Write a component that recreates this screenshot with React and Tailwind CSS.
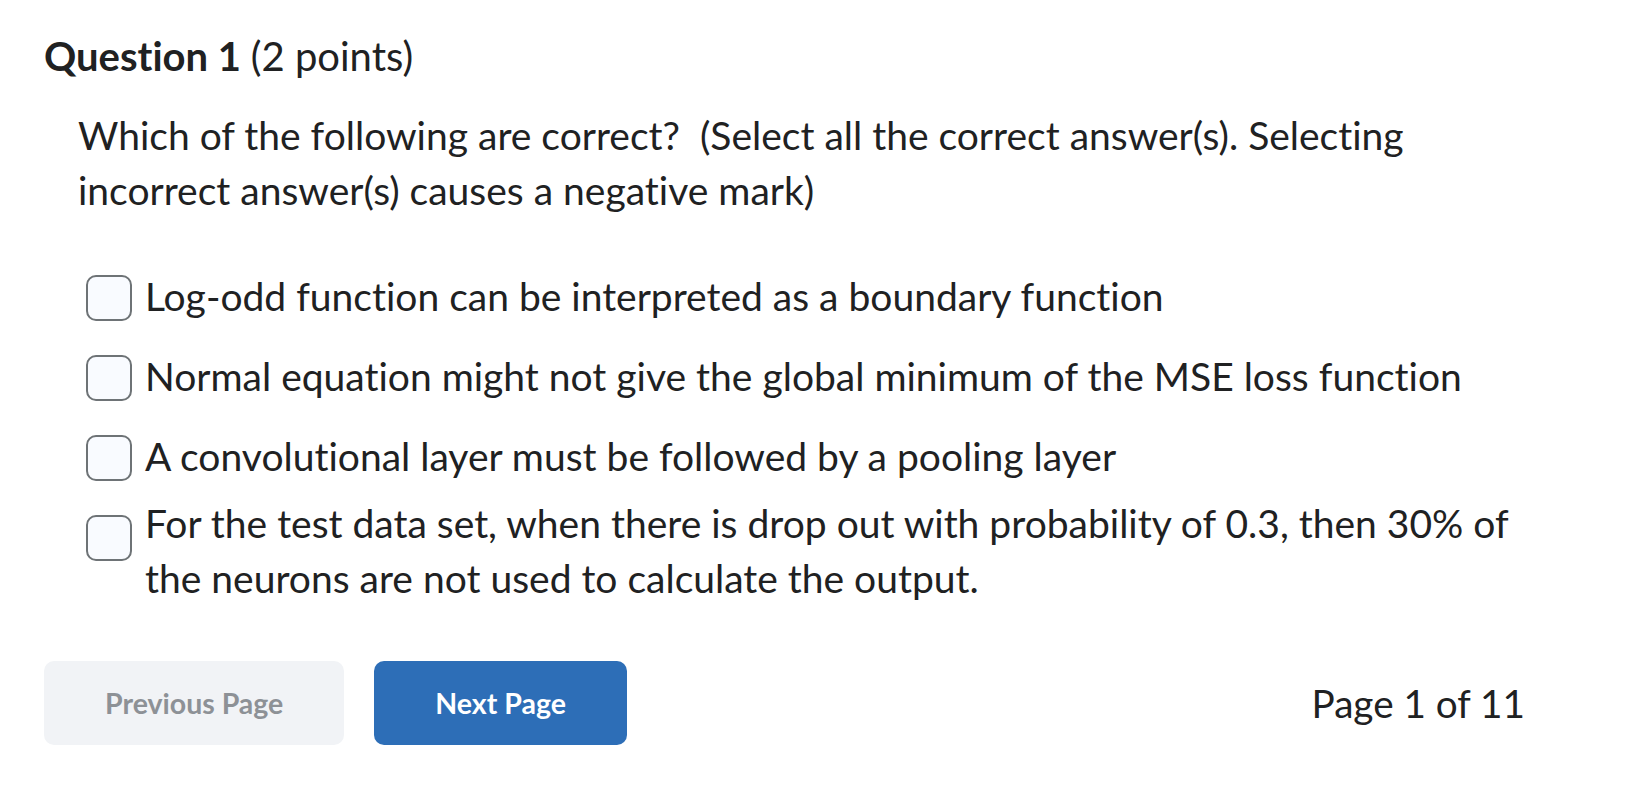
import React from "react";

const options = [
  "Log-odd function can be interpreted as a boundary function",
  "Normal equation might not give the global minimum of the MSE loss function",
  "A convolutional layer must be followed by a pooling layer",
];
const longOption =
  "For the test data set, when there is drop out with probability of 0.3, then 30% of the neurons are not used to calculate the output.";

function Box() {
  return (
    <span className="mt-[5.5px] shrink-0 w-[46px] h-[46px] rounded-[10px] border-2 border-[#6e7376] bg-[#f9fbff]" />
  );
}

export default function App() {
  return (
    <div
      className="w-[1630px] h-[796px] bg-white text-[#202122] pl-[44px] pt-[32px] [font-variant-ligatures:none]"
      style={{ fontFamily: "Lato, 'Noto Sans', sans-serif" }}
    >
      <h2 className="text-[40px] leading-[48px] font-bold">
        Question 1 <span className="font-normal">(2 points)</span>
      </h2>
      <div className="w-[1440px] pl-[34px] mt-[28px]">
        <p className="text-[39px] leading-[55px]">
          Which of the following are correct?&nbsp; (Select all the correct answer(s). Selecting incorrect answer(s) causes a negative mark)
        </p>
      </div>
      <ul className="w-[1496px] pl-[42px] mt-[51px] flex flex-col gap-[25px]">
        {options.map((o, i) => (
          <li key={i} className="flex items-start gap-[13px]">
            <Box />
            <span className="text-[39px] leading-[55px]">{o}</span>
          </li>
        ))}
        <li className="flex items-start gap-[13px]">
          <Box />
          <span className="-mt-[13px] text-[39px] leading-[55px]">{longOption}</span>
        </li>
      </ul>
      <div className="w-[1481px] mt-[55px] flex items-center justify-between">
        <div className="flex gap-[30px]">
          <button className="h-[84px] px-[61px] rounded-[10px] bg-[#f1f3f6] text-[#8d9196] text-[28.5px] font-bold">
            Previous Page
          </button>
          <button className="h-[84px] px-[61px] rounded-[10px] bg-[#2d6eb7] text-white text-[28.5px] font-bold">
            Next Page
          </button>
        </div>
        <span className="text-[38.7px] leading-[48px]">Page 1 of 11</span>
      </div>
    </div>
  );
}
